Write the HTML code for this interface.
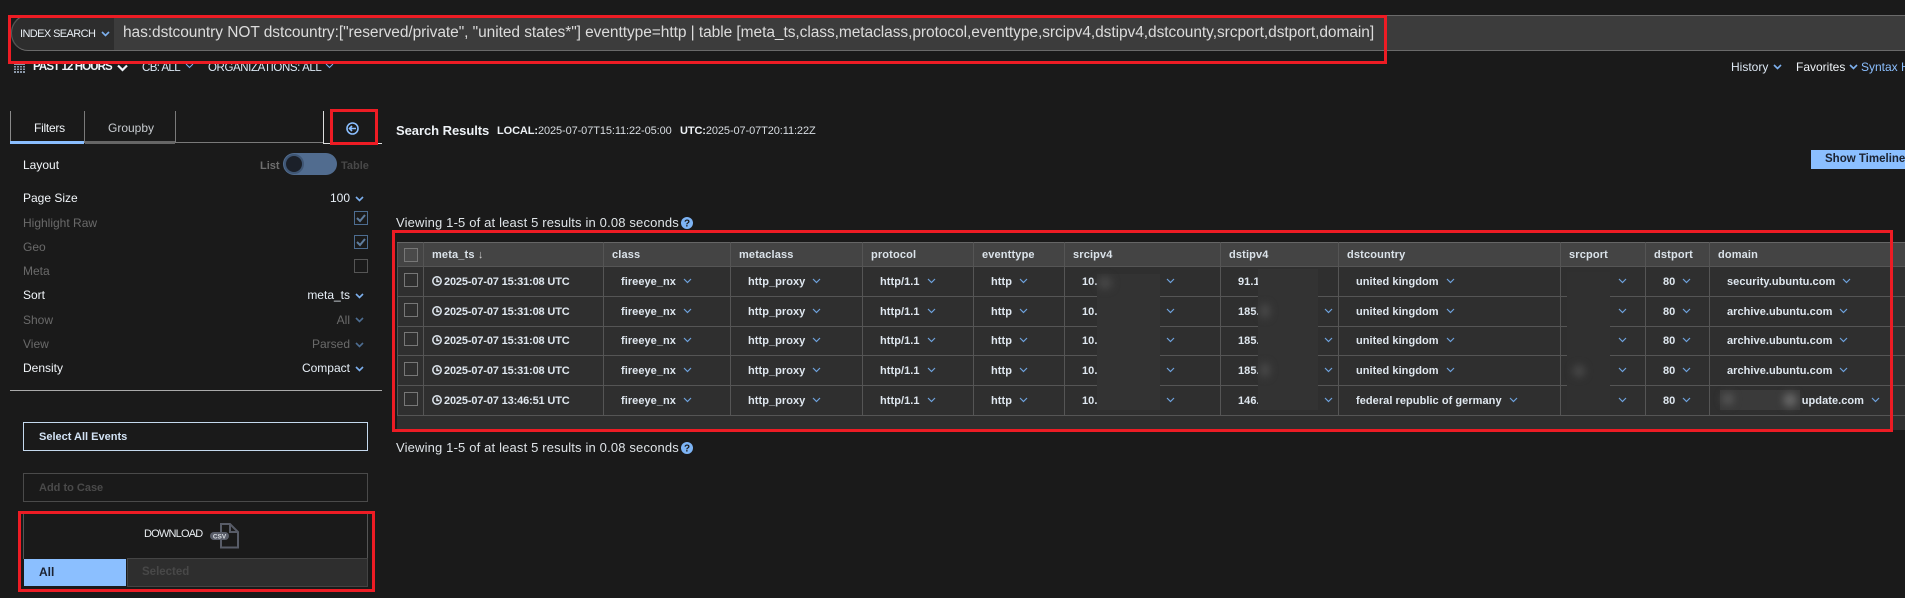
<!DOCTYPE html>
<html lang="en"><head><meta charset="utf-8"><title>Index Search</title>
<style>
html,body{margin:0;padding:0;background:#1a1a1a}
body{width:1905px;height:598px;overflow:hidden;position:relative;font-family:"Liberation Sans",sans-serif;color:#e4ecf4}
.a{position:absolute;white-space:nowrap}
.red{position:absolute;border:3px solid #ed1c24;box-sizing:border-box;z-index:5}
.c{display:inline-block;width:9px;height:6px;fill:none;stroke:#7db0ee;stroke-width:1.6}
.lab{font-size:12px;left:23px;line-height:16px;color:#f2f6fa}
.val{font-size:12px;right:1555px;line-height:16px;color:#e8f0f8;text-align:right}
.dim{color:#6a6a6a}
table{position:absolute;left:397px;top:242px;width:1508px;table-layout:fixed;border-collapse:collapse;background:#2f2f2f;font-size:11px;font-weight:bold;color:#dfe7ef}
th,td{border:1px solid #555;padding:0;white-space:nowrap;overflow:hidden;text-align:left;box-sizing:border-box}
tr:first-child th{border-top:1px solid #666}
th{background:#444;height:24px;padding-left:8px;letter-spacing:.15px;color:#dbe3ea}
td{padding-left:17px;letter-spacing:.05px}
td.b,th.b{padding-left:0}
td.t{padding-left:8px;letter-spacing:-.15px}
td .c{margin-left:7px;vertical-align:1px;stroke-width:1.2;stroke:#6fa3de}
.cb{display:block;width:14px;height:14px;border:1px solid #777;box-sizing:border-box;margin-left:6px}
td .cb{position:relative;top:-2px}
.ck{display:inline-block;width:10px;height:10px;vertical-align:-1px;margin-right:2px;fill:none;stroke:#dfe7ef;stroke-width:1.5}
.band{position:absolute;left:397px;top:415px;width:1508px;height:15px;background:#2f2f2f}
.p{position:absolute;background:#333;z-index:2}
.s{position:absolute;border-radius:50%;background:#555;filter:blur(4px);z-index:3}
</style></head><body>
<svg width="0" height="0" style="position:absolute"><defs><symbol id="ch" viewBox="0 0 9 6"><path d="M1 1l3.500 3.500L8 1"/></symbol><symbol id="clk" viewBox="0 0 10 10"><circle cx="5" cy="5" r="4.200"/><path d="M5 2.500V5.500H7.500"/></symbol></defs></svg>

<!-- search bar -->
<div class="a" style="left:11px;top:15px;width:1894px;height:36px;box-sizing:border-box;background:#3c3c3c;border-top:1px solid #6a6a6a;border-bottom:1px solid #6a6a6a;border-radius:17px 0 0 17px"></div>
<div class="a" style="left:11px;top:16px;width:103px;height:34px;background:#2d2d2d;border-radius:17px 0 0 17px;border-left:1px solid #5a5a5a;box-sizing:border-box"></div>
<div class="a" style="left:20px;top:26px;font-size:11px;line-height:16px;color:#e8eef4;letter-spacing:-.6px">INDEX SEARCH</div>
<svg class="c a" style="left:101px;top:31px"><use href="#ch"/></svg>
<div class="a" style="left:123px;top:23px;font-size:15.500px;line-height:20px;color:#dcdcdc;letter-spacing:-.06px">has:dstcountry NOT dstcountry:["reserved/private", "united states*"] eventtype=http | table [meta_ts,class,metaclass,protocol,eventtype,srcipv4,dstipv4,dstcounty,srcport,dstport,domain]</div>
<div class="red" style="left:8px;top:15px;width:1379px;height:49px"></div>

<!-- filter row -->
<svg class="a" style="left:14px;top:62px" width="11" height="11" viewBox="0 0 11 11"><path fill="#8a97a8" d="M0 1h11v10H0z"/><path stroke="#1a1a1a" stroke-width="1" d="M0 3.500h11M0 6h11M0 8.500h11M2.500 3v8M5.500 3v8M8.500 3v8"/></svg>
<div class="a" style="left:33px;top:59px;font-size:11.500px;line-height:16px;font-weight:bold;color:#eef3f8;letter-spacing:-.9px">PAST 12 HOURS</div>
<svg class="a" style="left:117px;top:64px;fill:none;stroke:#eef3f8;stroke-width:2.200" width="11" height="8" viewBox="0 0 11 8"><path d="M1 1.500l4.500 4.500L10 1.500"/></svg>
<div class="a" style="left:142px;top:60px;font-size:11.500px;line-height:16px;color:#dce8f4;letter-spacing:-.6px">CB: ALL</div>
<svg class="c a" style="left:185px;top:63px;stroke-width:1"><use href="#ch"/></svg>
<div class="a" style="left:208px;top:60px;font-size:11.500px;line-height:16px;color:#dce8f4;letter-spacing:-.4px">ORGANIZATIONS: ALL</div>
<svg class="c a" style="left:325px;top:63px;stroke-width:1"><use href="#ch"/></svg>

<div class="a" style="left:1731px;top:59px;font-size:12px;line-height:16px;color:#dde8f4">History</div>
<svg class="c a" style="left:1773px;top:64px"><use href="#ch"/></svg>
<div class="a" style="left:1796px;top:59px;font-size:12px;line-height:16px;color:#f0f4f8">Favorites</div>
<svg class="c a" style="left:1849px;top:64px"><use href="#ch"/></svg>
<div class="a" style="left:1861px;top:59px;font-size:12px;line-height:16px;color:#8bbfff">Syntax Highlight</div>

<!-- tabs -->
<div class="a" style="left:10px;top:111px;width:313px;height:31px;border-bottom:1px solid #7a7a7a"></div>
<div class="a" style="left:10px;top:111px;width:1px;height:32px;background:#8a8a8a"></div>
<div class="a" style="left:84px;top:111px;width:1px;height:32px;background:#7a7a7a"></div>
<div class="a" style="left:175px;top:111px;width:1px;height:32px;background:#7a7a7a"></div>
<div class="a" style="left:10px;top:141px;width:74px;height:3px;background:#8bbfff"></div>
<div class="a" style="left:85px;top:141px;width:90px;height:3px;background:#666"></div>
<div class="a" style="left:34px;top:120px;font-size:12px;line-height:16px;color:#f0f4f8;letter-spacing:-.25px">Filters</div>
<div class="a" style="left:108px;top:120px;font-size:12px;line-height:16px;color:#c8ccd0">Groupby</div>
<div class="a" style="left:323px;top:111px;width:1px;height:32px;background:#ddd"></div>
<div class="a" style="left:323px;top:143px;width:59px;height:1px;background:#ddd"></div>
<svg class="a" style="left:346px;top:122px" width="13" height="13" viewBox="0 0 13 13" fill="none" stroke="#8bbfff" stroke-width="1.600"><circle cx="6.500" cy="6.500" r="5.500"/><path d="M10 6.500H3.500M6 4L3.500 6.500 6 9"/></svg>
<div class="red" style="left:330px;top:109px;width:48px;height:36px"></div>

<div class="a" style="left:396px;top:122px;font-size:13px;line-height:18px;font-weight:bold;color:#eef2f6;letter-spacing:-.05px">Search Results</div>
<div class="a" style="left:497px;top:123px;font-size:11px;line-height:16px;color:#d8dde2;letter-spacing:-.1px"><b style="color:#eef2f6">LOCAL:</b>2025-07-07T15:11:22-05:00</div>
<div class="a" style="left:680px;top:123px;font-size:11px;line-height:16px;color:#d8dde2;letter-spacing:-.1px"><b style="color:#eef2f6">UTC:</b>2025-07-07T20:11:22Z</div>

<!-- settings -->
<div class="a lab" style="top:157px">Layout</div>
<div class="a" style="left:260px;top:158px;font-size:11px;line-height:16px;font-weight:bold;color:#6e6e6e">List</div>
<div class="a" style="left:283px;top:153px;width:54px;height:22px;border-radius:11px;background:#516c8f"></div>
<div class="a" style="left:284px;top:154px;width:20px;height:20px;border-radius:50%;background:#1b2029;border:2px solid #3f5674;box-sizing:border-box"></div>
<div class="a" style="left:341px;top:158px;font-size:11px;line-height:16px;font-weight:bold;color:#484848">Table</div>

<div class="a lab" style="top:190px">Page Size</div><div class="a val" style="top:190px">100</div><svg class="c a" style="left:355px;top:196px"><use href="#ch"/></svg>
<div class="a lab dim" style="top:215px">Highlight Raw</div>
<div class="a lab dim" style="top:239px">Geo</div>
<div class="a lab dim" style="top:263px">Meta</div>
<div class="a lab" style="top:287px">Sort</div><div class="a val" style="top:287px">meta_ts</div><svg class="c a" style="left:355px;top:293px"><use href="#ch"/></svg>
<div class="a lab dim" style="top:312px">Show</div><div class="a val dim" style="top:312px">All</div><svg class="c a" style="left:355px;top:317px;stroke:#4d6d91"><use href="#ch"/></svg>
<div class="a lab dim" style="top:336px">View</div><div class="a val dim" style="top:336px">Parsed</div><svg class="c a" style="left:355px;top:342px;stroke:#4d6d91"><use href="#ch"/></svg>
<div class="a lab" style="top:360px">Density</div><div class="a val" style="top:360px">Compact</div><svg class="c a" style="left:355px;top:366px"><use href="#ch"/></svg>

<svg class="a" style="left:354px;top:211px" width="14" height="14" viewBox="0 0 14 14"><rect x=".5" y=".5" width="13" height="13" fill="none" stroke="#4d6d91"/><path d="M3 7l3 3 5-6" fill="none" stroke="#5f7d9e" stroke-width="2"/></svg>
<svg class="a" style="left:354px;top:235px" width="14" height="14" viewBox="0 0 14 14"><rect x=".5" y=".5" width="13" height="13" fill="none" stroke="#4d6d91"/><path d="M3 7l3 3 5-6" fill="none" stroke="#5f7d9e" stroke-width="2"/></svg>
<svg class="a" style="left:354px;top:259px" width="14" height="14" viewBox="0 0 14 14"><rect x=".5" y=".5" width="13" height="13" fill="none" stroke="#555"/></svg>

<div class="a" style="left:10px;top:390px;width:372px;height:1px;background:#aaa"></div>

<div class="a" style="left:23px;top:422px;width:345px;height:29px;box-sizing:border-box;border:1px solid #c5d9ee;font-size:11px;font-weight:bold;line-height:29px;padding-left:15px;color:#d3e3f5">Select All Events</div>
<div class="a" style="left:23px;top:473px;width:345px;height:29px;box-sizing:border-box;border:1px solid #4a4a4a;font-size:11px;font-weight:bold;line-height:29px;padding-left:15px;color:#4a4a4a">Add to Case</div>

<div class="a" style="left:23px;top:514px;width:345px;height:45px;box-sizing:border-box;border-left:1px solid #555;border-right:1px solid #555"></div>
<div class="a" style="left:144px;top:526px;font-size:11px;line-height:16px;color:#e8ecf0;letter-spacing:-.8px">DOWNLOAD</div>
<svg class="a" style="left:209px;top:523px" width="31" height="26" viewBox="0 0 31 26"><path d="M12 1h9l8 8v15.500H12z" fill="#1a1a1a" stroke="#585c68" stroke-width="2"/><path d="M21 1v8h8" fill="none" stroke="#585c68" stroke-width="2"/><rect x="1" y="9" width="19" height="8" rx="4" fill="#585c68"/><text x="10.500" y="15.500" font-size="6.500" font-weight="bold" fill="#d8dce0" text-anchor="middle" font-family="Liberation Sans,sans-serif">CSV</text></svg>
<div class="a" style="left:24px;top:559px;width:102px;height:27px;background:#8bbfff;font-size:12px;font-weight:bold;line-height:27px;padding-left:15px;box-sizing:border-box;color:#1b2230">All</div>
<div class="a" style="left:127px;top:558px;width:241px;height:29px;background:#2e2e2e;border:1px solid #444;box-sizing:border-box;font-size:11.500px;font-weight:bold;line-height:27px;padding-left:14px;color:#484848">Selected</div>
<div class="red" style="left:18px;top:511px;width:357px;height:81px"></div>

<!-- results -->
<div class="a" style="left:1811px;top:150px;width:94px;height:19px;background:#8bbfff;font-size:11.500px;line-height:19px;font-weight:bold;color:#1b2230;padding-left:14px;box-sizing:border-box;overflow:hidden">Show Timeline</div>

<div class="a" style="left:396px;top:215px;font-size:13px;line-height:16px;color:#dfe4e8;letter-spacing:.16px">Viewing 1-5 of at least 5 results in 0.08 seconds</div>
<svg class="a" style="left:681px;top:217px" width="12" height="12" viewBox="0 0 12 12"><circle cx="6" cy="6" r="6" fill="#7db4f5"/><text x="6" y="9.500" font-size="10" font-weight="bold" fill="#1a1a1a" text-anchor="middle" font-family="Liberation Sans,sans-serif">?</text></svg>
<div class="a" style="left:396px;top:440px;font-size:13px;line-height:16px;color:#dfe4e8;letter-spacing:.16px">Viewing 1-5 of at least 5 results in 0.08 seconds</div>
<svg class="a" style="left:681px;top:442px" width="12" height="12" viewBox="0 0 12 12"><circle cx="6" cy="6" r="6" fill="#7db4f5"/><text x="6" y="9.500" font-size="10" font-weight="bold" fill="#1a1a1a" text-anchor="middle" font-family="Liberation Sans,sans-serif">?</text></svg>

<div class="band"></div>
<table>
<colgroup><col style="width:26px"><col style="width:180px"><col style="width:127px"><col style="width:132px"><col style="width:111px"><col style="width:91px"><col style="width:156px"><col style="width:118px"><col style="width:222px"><col style="width:85px"><col style="width:64px"><col style="width:196px"></colgroup>
<tr><th class="b"><span class="cb" style="background:#4a4a4a"></span></th><th>meta_ts <span style="font-weight:normal;color:#ccc">&#8595;</span></th><th>class</th><th>metaclass</th><th>protocol</th><th>eventtype</th><th>srcipv4</th><th>dstipv4</th><th>dstcountry</th><th>srcport</th><th>dstport</th><th>domain</th></tr>
<tr style="height:30px"><td class="b"><span class="cb"></span></td><td class="t"><svg class="ck"><use href="#clk"/></svg>2025-07-07 15:31:08 UTC</td><td>fireeye_nx<svg class="c"><use href="#ch"/></svg></td><td>http_proxy<svg class="c"><use href="#ch"/></svg></td><td>http/1.1<svg class="c"><use href="#ch"/></svg></td><td>http<svg class="c"><use href="#ch"/></svg></td><td>10.<svg class="c" style="margin-left:69px"><use href="#ch"/></svg></td><td>91.1</td><td>united kingdom<svg class="c"><use href="#ch"/></svg></td><td><svg class="c" style="margin-left:40px"><use href="#ch"/></svg></td><td>80<svg class="c"><use href="#ch"/></svg></td><td>security.ubuntu.com<svg class="c"><use href="#ch"/></svg></td></tr>
<tr style="height:30px"><td class="b"><span class="cb"></span></td><td class="t"><svg class="ck"><use href="#clk"/></svg>2025-07-07 15:31:08 UTC</td><td>fireeye_nx<svg class="c"><use href="#ch"/></svg></td><td>http_proxy<svg class="c"><use href="#ch"/></svg></td><td>http/1.1<svg class="c"><use href="#ch"/></svg></td><td>http<svg class="c"><use href="#ch"/></svg></td><td>10.<svg class="c" style="margin-left:69px"><use href="#ch"/></svg></td><td>185.<svg class="c" style="margin-left:64px"><use href="#ch"/></svg></td><td>united kingdom<svg class="c"><use href="#ch"/></svg></td><td><svg class="c" style="margin-left:40px"><use href="#ch"/></svg></td><td>80<svg class="c"><use href="#ch"/></svg></td><td>archive.ubuntu.com<svg class="c"><use href="#ch"/></svg></td></tr>
<tr style="height:29px"><td class="b"><span class="cb"></span></td><td class="t"><svg class="ck"><use href="#clk"/></svg>2025-07-07 15:31:08 UTC</td><td>fireeye_nx<svg class="c"><use href="#ch"/></svg></td><td>http_proxy<svg class="c"><use href="#ch"/></svg></td><td>http/1.1<svg class="c"><use href="#ch"/></svg></td><td>http<svg class="c"><use href="#ch"/></svg></td><td>10.<svg class="c" style="margin-left:69px"><use href="#ch"/></svg></td><td>185.<svg class="c" style="margin-left:64px"><use href="#ch"/></svg></td><td>united kingdom<svg class="c"><use href="#ch"/></svg></td><td><svg class="c" style="margin-left:40px"><use href="#ch"/></svg></td><td>80<svg class="c"><use href="#ch"/></svg></td><td>archive.ubuntu.com<svg class="c"><use href="#ch"/></svg></td></tr>
<tr style="height:30px"><td class="b"><span class="cb"></span></td><td class="t"><svg class="ck"><use href="#clk"/></svg>2025-07-07 15:31:08 UTC</td><td>fireeye_nx<svg class="c"><use href="#ch"/></svg></td><td>http_proxy<svg class="c"><use href="#ch"/></svg></td><td>http/1.1<svg class="c"><use href="#ch"/></svg></td><td>http<svg class="c"><use href="#ch"/></svg></td><td>10.<svg class="c" style="margin-left:69px"><use href="#ch"/></svg></td><td>185.<svg class="c" style="margin-left:64px"><use href="#ch"/></svg></td><td>united kingdom<svg class="c"><use href="#ch"/></svg></td><td><svg class="c" style="margin-left:40px"><use href="#ch"/></svg></td><td>80<svg class="c"><use href="#ch"/></svg></td><td>archive.ubuntu.com<svg class="c"><use href="#ch"/></svg></td></tr>
<tr style="height:30px"><td class="b"><span class="cb"></span></td><td class="t"><svg class="ck"><use href="#clk"/></svg>2025-07-07 13:46:51 UTC</td><td>fireeye_nx<svg class="c"><use href="#ch"/></svg></td><td>http_proxy<svg class="c"><use href="#ch"/></svg></td><td>http/1.1<svg class="c"><use href="#ch"/></svg></td><td>http<svg class="c"><use href="#ch"/></svg></td><td>10.<svg class="c" style="margin-left:69px"><use href="#ch"/></svg></td><td>146.<svg class="c" style="margin-left:64px"><use href="#ch"/></svg></td><td>federal republic of germany<svg class="c"><use href="#ch"/></svg></td><td><svg class="c" style="margin-left:40px"><use href="#ch"/></svg></td><td>80<svg class="c"><use href="#ch"/></svg></td><td style="text-align:right;padding-right:25px">update.com<svg class="c"><use href="#ch"/></svg></td></tr>
</table>

<!-- redaction patches -->
<div class="p" style="left:1097px;top:274px;width:63px;height:136px"></div>
<div class="p" style="left:1258px;top:269px;width:60px;height:141px"></div>
<div class="p" style="left:1567px;top:272px;width:43px;height:138px;background:#303030"></div>
<div class="p" style="left:1720px;top:390px;width:80px;height:20px;background:#3a3a3a"></div>
<div class="s" style="left:1783px;top:393px;width:14px;height:14px;background:#666"></div>
<div class="s" style="left:1722px;top:393px;width:12px;height:12px"></div>
<div class="s" style="left:1098px;top:277px;width:14px;height:12px;background:#484848"></div>
<div class="s" style="left:1260px;top:304px;width:10px;height:14px;background:#4a4a4a"></div>
<div class="s" style="left:1260px;top:363px;width:10px;height:14px;background:#4a4a4a"></div>
<div class="s" style="left:1573px;top:365px;width:12px;height:12px;background:#484848"></div>

<div class="red" style="left:392px;top:230px;width:1501px;height:202px"></div>
</body></html>
